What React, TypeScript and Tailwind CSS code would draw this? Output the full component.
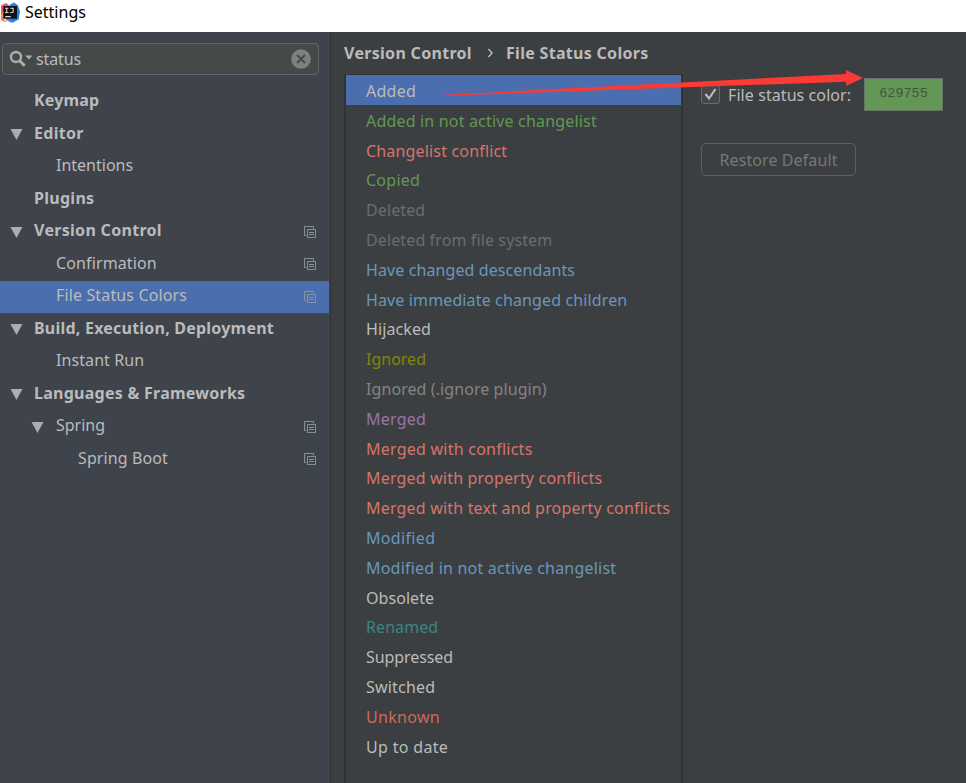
type TreeItem = {
  label: string;
  level: number;
  open?: boolean;
  bold?: boolean;
  copy?: boolean;
  selected?: boolean;
  tracking?: string;
};

const tree: TreeItem[] = [
  { label: "Keymap", level: 0, bold: true, tracking: "tracking-[0.15px]" },
  { label: "Editor", level: 0, bold: true, open: true, tracking: "tracking-[0.3px]" },
  { label: "Intentions", level: 1 },
  { label: "Plugins", level: 0, bold: true, tracking: "tracking-[0.28px]" },
  {
    label: "Version Control",
    level: 0,
    bold: true,
    open: true,
    copy: true,
    tracking: "tracking-[0.3px]",
  },
  { label: "Confirmation", level: 1, copy: true, tracking: "tracking-[0.12px]" },
  {
    label: "File Status Colors",
    level: 1,
    copy: true,
    selected: true,
    tracking: "tracking-[0.14px]",
  },
  {
    label: "Build, Execution, Deployment",
    level: 0,
    bold: true,
    open: true,
    tracking: "tracking-[0.22px]",
  },
  { label: "Instant Run", level: 1, tracking: "tracking-[0.08px]" },
  {
    label: "Languages & Frameworks",
    level: 0,
    bold: true,
    open: true,
    tracking: "tracking-[0.25px]",
  },
  { label: "Spring", level: 1, open: true, copy: true },
  { label: "Spring Boot", level: 2, copy: true, tracking: "tracking-[0.1px]" },
];

const statuses = [
  { label: "Added", color: "text-[#bbbbbb]", tracking: "tracking-[0.25px]" },
  { label: "Added in not active changelist", color: "text-[#629755]", tracking: "tracking-[0.18px]" },
  { label: "Changelist conflict", color: "text-[#d5756c]", tracking: "tracking-[0.17px]" },
  { label: "Copied", color: "text-[#629755]", tracking: "tracking-[0.25px]" },
  { label: "Deleted", color: "text-[#6c6c6c]", tracking: "tracking-[0.1px]" },
  { label: "Deleted from file system", color: "text-[#6c6c6c]", tracking: "tracking-[0.12px]" },
  { label: "Have changed descendants", color: "text-[#6897bb]", tracking: "tracking-[0.1px]" },
  { label: "Have immediate changed children", color: "text-[#6897bb]", tracking: "tracking-[0.13px]" },
  { label: "Hijacked", color: "text-[#bbbbbb]", tracking: "tracking-[0.1px]" },
  { label: "Ignored", color: "text-[#848504]", tracking: "tracking-normal" },
  { label: "Ignored (.ignore plugin)", color: "text-[#848484]", tracking: "tracking-[0.08px]" },
  { label: "Merged", color: "text-[#9876aa]", tracking: "tracking-[0.25px]" },
  { label: "Merged with conflicts", color: "text-[#d5756c]", tracking: "tracking-[0.24px]" },
  { label: "Merged with property conflicts", color: "text-[#d5756c]", tracking: "tracking-[0.18px]" },
  {
    label: "Merged with text and property conflicts",
    color: "text-[#d5756c]",
    tracking: "tracking-[0.19px]",
  },
  { label: "Modified", color: "text-[#6897bb]", tracking: "tracking-[0.33px]" },
  { label: "Modified in not active changelist", color: "text-[#6897bb]", tracking: "tracking-[0.21px]" },
  { label: "Obsolete", color: "text-[#bbbbbb]", tracking: "tracking-[0.05px]" },
  { label: "Renamed", color: "text-[#3a8484]", tracking: "tracking-[0.08px]" },
  { label: "Suppressed", color: "text-[#bbbbbb]", tracking: "tracking-[-0.08px]" },
  { label: "Switched", color: "text-[#bbbbbb]", tracking: "tracking-[0.2px]" },
  { label: "Unknown", color: "text-[#d1675a]", tracking: "tracking-[0.3px]" },
  { label: "Up to date", color: "text-[#bbbbbb]", tracking: "tracking-[0.33px]" },
];

const indents = ["pl-[10px]", "pl-[31px]", "pl-[53px]"];

function Logo() {
  return (
    <svg width="21" height="21" viewBox="0 0 21 21">
      <path d="M1 10l3-1v9l3 1.5-2 .5-4-2z" fill="#f97a3d" />
      <path d="M1 3.5L6 1l4 3-5 8-4 .5z" fill="#f7506c" />
      <path d="M2 10l3-2v8l-2 1-2-2z" fill="#fb8a5a" />
      <path d="M10 2.5L14 .5l4 3 2 6-1.5 8-5.5 3-7-2.5z" fill="#1587f5" />
      <path d="M5 17h6l3 3-3 .5z" fill="#5a6be8" />
      <rect x="3.3" y="4" width="13.7" height="12.7" fill="#111" />
      <path
        d="M5 6.2h3.4M6.7 6.2v4.3M5 10.5h3.4M10.2 6.2h3v3.2q0 1.1-1.2 1.1h-1.8M5.2 14.6h5.6"
        stroke="#d4d4d4"
        strokeWidth="1.1"
        fill="none"
      />
    </svg>
  );
}

function CopyIcon() {
  return (
    <svg width="12" height="12" viewBox="0 0 12 12" fill="none">
      <path d="M2.5 9.5h-2v-9h9v2" stroke="#87939a" />
      <path d="M3.5 3.5h8v8h-8z" stroke="#87939a" />
      <path d="M5 6.5h5M5 8.5h5" stroke="#87939a" />
    </svg>
  );
}

function Tree() {
  return (
    <div className="mt-[10.6px] w-[329px]">
      {tree.map((item) => (
        <div
          key={item.label}
          className={`flex h-[32.5px] items-center pr-[13px] ${indents[item.level]} ${
            item.selected ? "bg-[#4b6eaf]" : ""
          }`}
        >
          <div className={`shrink-0 ${item.level === 0 ? "w-6" : "w-[25px]"}`}>
            {item.open ? (
              <svg className="mt-px" width="13" height="11" viewBox="0 0 13 11">
                <path d="M.5 0h12l-6 11z" fill="#adadad" />
              </svg>
            ) : (
              ""
            )}
          </div>
          <span
            className={`flex-1 whitespace-nowrap pb-[3.2px] ${
              item.bold ? "font-bold" : ""
            } ${item.tracking ?? ""}`}
          >
            {item.label}
          </span>
          {item.copy ? <CopyIcon /> : ""}
        </div>
      ))}
    </div>
  );
}

function Sidebar() {
  return (
    <div className="w-[331px] shrink-0 border-r border-[#323232] bg-[#3e434c] pt-[11px]">
      <div className="ml-[2px] flex h-8 w-[317px] items-center rounded-[4px] border border-[#646464] bg-[#45494a] pl-[6px] pr-[7px]">
        <svg width="26" height="18" viewBox="0 0 26 18" fill="none">
          <circle cx="7" cy="7" r="5" stroke="#adadad" strokeWidth="2.4" />
          <path d="M10.7 10.7l5 5" stroke="#adadad" strokeWidth="3" />
          <path d="M16.2 5.5h7.3l-3.6 4z" fill="#adadad" />
        </svg>
        <span className="ml-px flex-1 tracking-[-0.1px]">status</span>
        <svg width="20" height="20" viewBox="0 0 20 20">
          <circle cx="10" cy="10" r="9.8" fill="#7f8081" />
          <path d="M6 6l8 8M14 6l-8 8" stroke="#45494a" strokeWidth="2" />
        </svg>
      </div>
      <Tree />
    </div>
  );
}

function StatusList() {
  return (
    <div className="w-[339px] flex-1 border-x-2 border-t border-[#323232]">
      {statuses.map((status, i) => (
        <div
          key={status.label}
          className={`flex h-[29.8px] items-center whitespace-nowrap pl-5 pt-[2.35px] ${status.color} ${
            status.tracking
          } ${i === 0 ? "bg-[#4b6eaf]" : ""}`}
        >
          {status.label}
        </div>
      ))}
    </div>
  );
}

function Options() {
  return (
    <div className="pl-[18px] pt-[46px]">
      <div className="flex h-8 items-center">
        <div className="flex h-[19px] w-[19px] items-center justify-center rounded-[3px] border border-[#6b6b6b] bg-[#43474a]">
          <svg width="13" height="13" viewBox="0 0 13 13" fill="none">
            <path d="M1.5 6l3.5 4.5L11.5 1" stroke="#bbbbbb" strokeWidth="2.2" />
          </svg>
        </div>
        <span className="ml-2 w-[127px] whitespace-nowrap pt-[2px] tracking-[0.08px]">
          File status color:
        </span>
        <div className="ml-[9px] flex h-[33px] w-[79px] justify-center self-start border border-[#6a7066] bg-[#629755] pt-[5px] font-['Liberation_Mono'] text-[13.5px] leading-5 text-[#43563d]">
          629755
        </div>
      </div>
      <div className="mt-[33px] flex h-[33px] w-[155px] items-center justify-center rounded-[5px] border border-[#5e6060] tracking-[0.1px] text-[#777777]">
        Restore Default
      </div>
    </div>
  );
}

export default function App() {
  return (
    <div className="relative flex h-[783px] w-[966px] flex-col overflow-hidden bg-[#3c3f41] font-['Noto_Sans',sans-serif] text-[16px] leading-6 text-[#bbbbbb]">
      <div className="flex h-8 shrink-0 items-start bg-white text-black">
        <div className="mt-[2px]">
          <Logo />
        </div>
        <span className="ml-1">Settings</span>
      </div>
      <div className="flex min-h-0 flex-1">
        <Sidebar />
        <div className="ml-[13px] flex w-[339px] shrink-0 flex-col">
          <div className="flex h-[42px] shrink-0 items-center whitespace-nowrap font-bold tracking-[0.3px]">
            <span className="w-[143px]">Version Control</span>
            <svg className="mr-[12px]" width="7" height="10" viewBox="0 0 7 10" fill="none">
              <path d="M1.5 1l3.5 4-3.5 4" stroke="#bbbbbb" strokeWidth="1.4" />
            </svg>
            <span>File Status Colors</span>
          </div>
          <StatusList />
        </div>
        <Options />
      </div>
      <svg className="absolute left-[444px] top-[68px]" width="422" height="30" viewBox="0 0 422 30">
        <path d="M0 26.8L402 6V2l17 8-17 8v-4.3L0 27.8z" fill="#fb3a35" />
      </svg>
    </div>
  );
}
